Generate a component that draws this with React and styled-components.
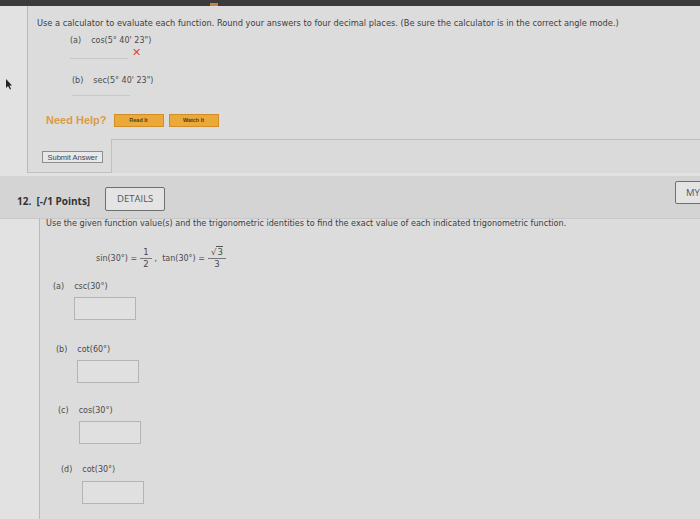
import React from 'react';
import styled, { createGlobalStyle } from 'styled-components';

const GlobalStyle = createGlobalStyle`
  html, body {
    margin: 0;
    padding: 0;
    background: #dedede;
  }
  body {
    width: 700px;
    height: 519px;
    overflow: hidden;
    font-family: "DejaVu Sans", Verdana, sans-serif;
    color: #4a4a4a;
  }
`;

const TabStrip = styled.div`
  height: 6px;
  background: #3d3b39;
  display: flex;
  align-items: flex-end;
  padding-left: 210px;
  .tab-icon {
    width: 8px;
    height: 3px;
    background: #c8823a;
  }
`;

const Row = styled.div`
  display: flex;
  background: #e2e2e2;
  height: ${(p) => (p.h ? `${p.h}px` : 'auto')};
`;

const Gutter = styled.div`
  width: ${(p) => p.w}px;
  flex-shrink: 0;
  position: relative;
`;

const Panel = styled.div`
  flex: 1;
  border-left: 1px solid #b9b9b9;
  background: #dcdcdc;
  display: flex;
  flex-direction: column;
`;

const Prompt = styled.p`
  margin: ${(p) => p.m};
  font-size: ${(p) => p.size}px;
  line-height: ${(p) => p.lh}px;
  color: #3e3e3e;
  padding-left: ${(p) => p.indent}px;
`;

const Part = styled.div`
  display: flex;
  gap: 10px;
  font-size: 8px;
  line-height: 11px;
  color: #4a4a4a;
  padding-left: ${(p) => p.indent}px;
  margin-top: ${(p) => p.top}px;
`;

const AnswerLine = styled.div`
  display: flex;
  align-items: flex-end;
  gap: 7px;
  margin-left: ${(p) => p.indent}px;
  margin-top: ${(p) => p.top}px;
  .line {
    width: 58px;
    height: 8px;
    border-bottom: 1px solid #c8c8c8;
  }
  .x {
    color: #e0473d;
    font-weight: bold;
    font-size: 11px;
    line-height: 11px;
    margin-bottom: 1px;
    margin-left: -3px;
  }
`;

const HelpRow = styled.div`
  display: flex;
  align-items: center;
  gap: 5px;
  padding-left: 18px;
  margin-top: 17px;
  height: 14px;
`;

const HelpLabel = styled.span`
  font-family: "Liberation Sans", Arial, sans-serif;
  font-weight: bold;
  font-size: 11px;
  color: #dd9a45;
  margin-right: 2px;
`;

const HelpButton = styled.span`
  display: inline-flex;
  align-items: center;
  justify-content: center;
  width: 48px;
  height: 11px;
  background: #eba93a;
  border: 1px solid #d38e2a;
  font-family: "Liberation Sans", Arial, sans-serif;
  font-size: 5.5px;
  font-weight: bold;
  color: #5a3a12;
`;

const SubmitRow = styled.div`
  display: flex;
  margin-top: 12px;
  height: 34px;
`;

const SubmitTab = styled.div`
  width: 84px;
  border-right: 1px solid #c0c0c0;
  border-bottom: 1px solid #c0c0c0;
  display: flex;
  align-items: flex-start;
  padding: 12px 0 0 14px;
  box-sizing: border-box;
`;

const Filler = styled.div`
  flex: 1;
  border-top: 1px solid #bdbdbd;
  background: #dadada;
`;

const SubmitButton = styled.span`
  display: inline-flex;
  align-items: center;
  justify-content: center;
  width: 61px;
  height: 12px;
  box-sizing: border-box;
  border: 1px solid #8e8e8e;
  background: #e8e8e8;
  font-family: "Liberation Sans", Arial, sans-serif;
  font-size: 7.5px;
  color: #444;
`;

const Spacer = styled.div`
  height: 3px;
  background: #e2e2e2;
`;

const Header = styled.div`
  height: 42px;
  background: #d4d4d4;
  border-bottom: 1px solid #c8c8c8;
  display: flex;
  align-items: center;
  padding-left: 17px;
  position: relative;
`;

const Points = styled.span`
  font-family: "Open Sans", "DejaVu Sans", sans-serif;
  font-weight: bold;
  font-size: 10px;
  color: #333;
  margin-top: 8px;
`;

const Details = styled.span`
  margin-left: 15px;
  margin-top: 3px;
  width: 58px;
  height: 22px;
  border: 1px solid #6f6f6f;
  border-radius: 2px;
  background: #e4e4e4;
  display: inline-flex;
  align-items: center;
  justify-content: center;
  font-family: "Open Sans", "DejaVu Sans", sans-serif;
  font-size: 9.5px;
  color: #555;
`;

const MyNotes = styled.span`
  position: absolute;
  right: -10px;
  top: 5px;
  width: 35px;
  height: 23px;
  border: 1px solid #6f6f6f;
  border-radius: 2px;
  background: #e4e4e4;
  display: inline-flex;
  align-items: center;
  padding-left: 10px;
  box-sizing: border-box;
  font-family: "Open Sans", "DejaVu Sans", sans-serif;
  font-size: 9.5px;
  color: #556;
`;

const Given = styled.div`
  display: flex;
  align-items: center;
  gap: 3px;
  margin: 20px 0 0 56px;
  font-size: 8px;
  color: #4a4a4a;
`;

const Frac = styled.span`
  display: inline-flex;
  flex-direction: column;
  align-items: center;
  font-size: 8.5px;
  line-height: 11px;
  .num {
    border-bottom: 1px solid #777;
    padding: 0 3px;
  }
  .root {
    border-top: 1px solid #555;
    padding-left: 1px;
  }
`;

const AnswerBox = styled.div`
  width: 62px;
  height: 23px;
  box-sizing: border-box;
  border: 1px solid #b4b4b4;
  background: #e0e0e0;
  margin-left: ${(p) => p.indent}px;
  margin-top: ${(p) => p.top}px;
`;

const Cursor = styled.svg`
  position: absolute;
  left: 5px;
  top: 73px;
`;

const q12Parts = [
  { label: '(a)', fn: 'csc(30°)', indent: 11, top: 11, box: 5 },
  { label: '(b)', fn: 'cot(60°)', indent: 14, top: 24, box: 5 },
  { label: '(c)', fn: 'cos(30°)', indent: 16, top: 22, box: 5 },
  { label: '(d)', fn: 'cot(30°)', indent: 19, top: 20, box: 6 },
];

export default function App() {
  return (
    <>
      <GlobalStyle />
      <TabStrip>
        <div className="tab-icon" />
      </TabStrip>

      <Row>
        <Gutter w={27}>
          <Cursor width="8" height="11" viewBox="0 0 8 11">
            <path d="M1 0 L1 9 L3 7 L5 10.5 L6 10 L4.5 6.5 L7 6.5 Z" fill="#222" />
          </Cursor>
        </Gutter>
        <Panel>
          <Prompt m="11px 0 0 0" size={8.25} lh={12} indent={9}>
            Use a calculator to evaluate each function. Round your answers to four decimal places. (Be sure the calculator is in the correct angle mode.)
          </Prompt>
          <Part indent={42} top={6}>
            <span>(a)</span>
            <span>cos(5° 40' 23")</span>
          </Part>
          <AnswerLine indent={42} top={1}>
            <div className="line" />
            <span className="x">✕</span>
          </AnswerLine>
          <Part indent={44} top={16}>
            <span>(b)</span>
            <span>sec(5° 40' 23")</span>
          </Part>
          <AnswerLine indent={44} top={1}>
            <div className="line" />
          </AnswerLine>
          <HelpRow>
            <HelpLabel>Need Help?</HelpLabel>
            <HelpButton>Read It</HelpButton>
            <HelpButton>Watch It</HelpButton>
          </HelpRow>
          <SubmitRow>
            <SubmitTab>
              <SubmitButton>Submit Answer</SubmitButton>
            </SubmitTab>
            <Filler />
          </SubmitRow>
        </Panel>
      </Row>

      <Spacer />

      <Header>
        <Points>12.&nbsp; [-/1 Points]</Points>
        <Details>DETAILS</Details>
        <MyNotes>MY</MyNotes>
      </Header>

      <Row h={300}>
        <Gutter w={39} />
        <Panel>
          <Prompt m="0" size={8.1} lh={8} indent={6}>
            Use the given function value(s) and the trigonometric identities to find the exact value of each indicated trigonometric function.
          </Prompt>
          <Given>
            <span>sin(30°) =</span>
            <Frac>
              <span className="num">1</span>
              <span>2</span>
            </Frac>
            <span>,&nbsp; tan(30°) =</span>
            <Frac>
              <span className="num">
                √<span className="root">3</span>
              </span>
              <span>3</span>
            </Frac>
          </Given>
          {q12Parts.map((p) => (
            <React.Fragment key={p.label}>
              <Part indent={p.indent + 2} top={p.top}>
                <span>{p.label}</span>
                <span>{p.fn}</span>
              </Part>
              <AnswerBox indent={p.indent + 23} top={p.box} />
            </React.Fragment>
          ))}
        </Panel>
      </Row>
    </>
  );
}
